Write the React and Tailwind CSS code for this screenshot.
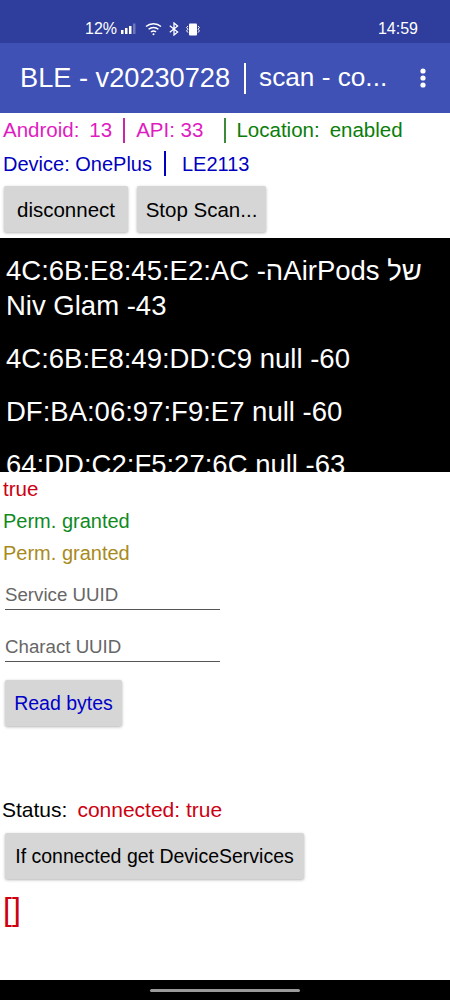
import React from "react";

const StatusIcons = () => (
  <div className="flex items-center gap-[5px]">
    {/* signal */}
    <svg width="17" height="12" viewBox="0 0 17 12" fill="white">
      <rect x="1" y="7" width="2.5" height="4" />
      <rect x="5" y="5" width="2.5" height="6" />
      <rect x="9" y="3" width="2.5" height="8" />
      <rect x="13" y="0.5" width="2.5" height="10.5" opacity="0.3" />
    </svg>
    {/* wifi */}
    <svg width="17" height="14" viewBox="0 0 17 14" fill="none" stroke="white" strokeWidth="1.5" className="ml-[3px]">
      <path d="M1 4.5C5.2 0.7 11.8 0.7 16 4.5" />
      <path d="M3.6 7.3C6.4 4.9 10.6 4.9 13.4 7.3" />
      <path d="M6 10C7.4 8.9 9.6 8.9 11 10" />
      <circle cx="8.5" cy="12.3" r="1" fill="white" stroke="none" />
    </svg>
    {/* bluetooth */}
    <svg width="10" height="14" viewBox="0 0 10 14" fill="none" stroke="white" strokeWidth="1.3" className="ml-[2px]">
      <path d="M0.8 3.8L8.6 10L5 13V1L8.6 4L0.8 10.2" />
    </svg>
    {/* vibrate */}
    <svg width="14" height="13" viewBox="0 0 14 13" fill="white" className="ml-[2px]">
      <rect x="3" y="0.5" width="8" height="12" rx="1" />
      <path d="M2 3L0.6 4.6L2 6.2L0.6 7.8L2 9.6M12 3L13.4 4.6L12 6.2L13.4 7.8L12 9.6" fill="none" stroke="white" strokeWidth="1" />
    </svg>
  </div>
);

const GrayButton = ({ children, className }) => (
  <button className={`h-[46px] bg-[#d6d6d6] rounded-[2px] shadow-[0_1px_3px_rgba(0,0,0,0.3)] pt-[2px] text-center ${className}`}>
    {children}
  </button>
);

const devices = [
  "4C:6B:E8:45:E2:AC -הAirPods של Niv Glam -43",
  "4C:6B:E8:49:DD:C9 null -60",
  "DF:BA:06:97:F9:E7 null -60",
  "64:DD:C2:F5:27:6C null -63",
];

export default function App() {
  return (
    <div className="w-[450px] h-[1000px] flex flex-col bg-white overflow-hidden font-['Liberation_Sans',sans-serif]">
      {/* status bar */}
      <div className="h-[43px] bg-[#2f3d9c] flex items-center pl-[85px] pr-[32px] pt-[15px] text-white text-[16px]">
        <span className="mr-[3px]">12%</span>
        <StatusIcons />
        <span className="ml-auto">14:59</span>
      </div>

      {/* app bar */}
      <div className="h-[70px] bg-[#3f51b5] flex items-center pl-[20px] pr-[24px] text-white text-[27.2px]">
        <span>BLE - v20230728</span>
        <span className="w-[2px] h-[31px] bg-white ml-[14px] mr-[13px]"></span>
        <span className="text-[26.2px]">scan - co...</span>
        <svg width="6" height="20" viewBox="0 0 6 20" fill="white" className="ml-auto">
          <circle cx="3" cy="3" r="2.6" />
          <circle cx="3" cy="10" r="2.6" />
          <circle cx="3" cy="17" r="2.6" />
        </svg>
      </div>

      {/* device info */}
      <div className="h-[33px] flex items-center pl-[3px] pt-[2px] text-[20.5px] text-[#e01cc0]">
        <span>Android:</span>
        <span className="ml-[10px]">13</span>
        <span className="w-[2px] h-[25px] bg-[#c828a8] mx-[11px]"></span>
        <span>API: 33</span>
        <span className="w-[2px] h-[25px] bg-[#3c8a3c] ml-[21px] mr-[10px]"></span>
        <span className="text-[#0a7d0a]">Location:</span>
        <span className="text-[#0a7d0a] ml-[10px]">enabled</span>
      </div>
      <div className="h-[33px] flex items-center pl-[3px] pt-[2px] text-[20px] text-[#0000c0]">
        <span>Device: OnePlus</span>
        <span className="w-[2px] h-[25px] bg-[#0000c0] ml-[12px] mr-[16px]"></span>
        <span>LE2113</span>
      </div>

      <div className="flex gap-[9px] pl-[4px] mt-[7px] text-black text-[20.5px]">
        <GrayButton className="w-[124px]">disconnect</GrayButton>
        <GrayButton className="w-[129px]">Stop Scan...</GrayButton>
      </div>

      {/* scan results */}
      <div className="h-[234px] mt-[6px] pt-[6px] bg-black text-white text-[27.5px] leading-[35px] pl-[6px] pr-[20px] overflow-hidden">
        {devices.map((d) => (
          <div key={d} className="py-[9px]">{d}</div>
        ))}
      </div>

      <div className="h-[33px] pl-[3px] pt-[2px] flex items-center text-[20.5px] text-[#cc0011]">true</div>
      <div className="h-[32px] pl-[3px] flex items-center text-[20px] text-[#0f8a1f]">Perm. granted</div>
      <div className="h-[32px] pl-[3px] flex items-center text-[20px] text-[#a88a1c]">Perm. granted</div>

      <input
        placeholder="Service UUID"
        className="w-[215px] h-[35px] ml-[5px] mt-[6px] pt-[5px] border-b border-[#555] outline-none text-[18.7px] placeholder:text-[#666]"
      />
      <input
        placeholder="Charact UUID"
        className="w-[215px] h-[35px] ml-[5px] mt-[17px] pt-[5px] border-b border-[#555] outline-none text-[18.7px] placeholder:text-[#666]"
      />

      <GrayButton className="w-[117px] ml-[5px] mt-[18px] text-[19.5px] text-[#0000c8]">Read bytes</GrayButton>

      <div className="flex items-center pl-[2px] mt-[71px] h-[26px] text-[21px]">
        <span className="text-black">Status:</span>
        <span className="ml-[10px] text-[#cc0011]">connected: true</span>
      </div>

      <GrayButton className="w-[299px] ml-[5px] mt-[10px] text-[19.5px] text-black">If connected get DeviceServices</GrayButton>

      <div className="pl-[3px] mt-[10px] text-[32px] leading-[40px] font-medium text-[#cc0011]">[]</div>

      {/* nav bar */}
      <div className="mt-auto h-[20px] bg-black flex items-center justify-center">
        <div className="w-[150px] h-[3px] rounded-full bg-[#9a9a9a]"></div>
      </div>
    </div>
  );
}
